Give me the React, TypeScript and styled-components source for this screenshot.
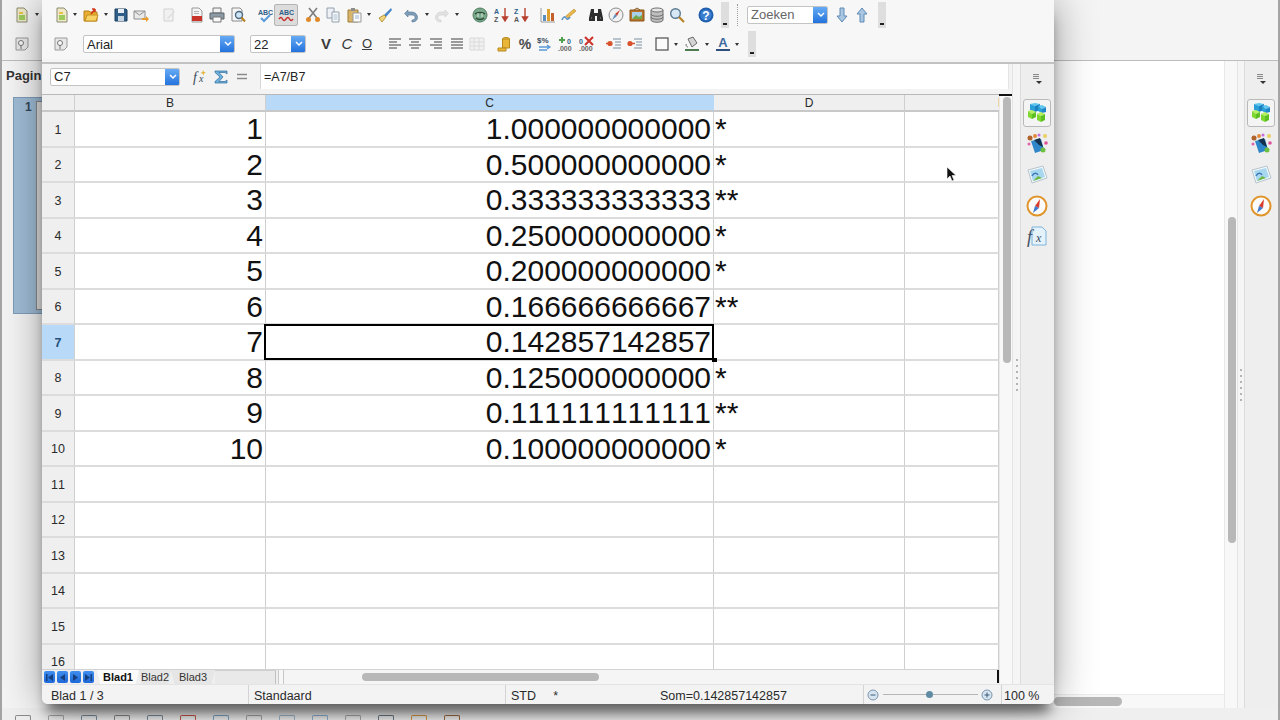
import React from "react";
import styled, { createGlobalStyle } from "styled-components";

const GlobalStyle = createGlobalStyle`
  html, body { margin: 0; padding: 0; width: 1280px; height: 720px; overflow: hidden; }
  body { font-family: "Liberation Sans", Arial, sans-serif; color: #1c1c1c; background: #f4f4f4; font-kerning: none; }
`;

const Desktop = styled.div`
  position: relative;
  width: 1280px;
  height: 720px;
  overflow: hidden;
  background: #f4f4f4;
`;

/* window at the back */
const BackWindow = styled.div`
  position: absolute;
  inset: 0;
  display: flex;
  flex-direction: column;
  border-left: 2px solid #a4a4a4;
  border-right: 2px solid #a4a4a4;
  background: #f4f4f4;
`;
const BackTop = styled.div`
  height: 61px;
  flex: none;
  box-sizing: border-box;
  border-bottom: 1px solid #bdbdbd;
  display: flex;
  flex-direction: column;
  padding-left: 3px;
`;
const BackToolRow = styled.div<{ $h: number }>`
  height: ${(p) => p.$h}px;
  display: flex;
  align-items: center;
  gap: 4px;
  padding-left: 9px;
`;
const BackBody = styled.div`
  flex: 1;
  display: flex;
  min-height: 0;
`;
const PagePanel = styled.div`
  width: 40px;
  flex: none;
  box-sizing: border-box;
  padding: 7px 0 0 4px;
`;
const PageTitle = styled.div`
  font-size: 13px;
  font-weight: 700;
  line-height: 15px;
  white-space: nowrap;
  color: #333;
`;
const PageThumb = styled.div`
  position: relative;
  margin: 14px 0 0 7px;
  width: 40px;
  height: 217px;
  box-sizing: border-box;
  border: 1px solid #7f9db9;
  background: #9fbcd6;
  font-size: 12px;
  font-weight: 700;
  color: #33465a;
  padding: 2px 0 0 11px;
  &::after {
    content: "";
    position: absolute;
    left: 22px;
    top: 3px;
    bottom: 3px;
    width: 16px;
    background: #e2e2e2;
    border: 1px solid #8b8b8b;
  }
`;
const BackCanvas = styled.div`
  flex: 1;
  display: flex;
  flex-direction: column;
`;
const BackSheet = styled.div`
  flex: 1;
  background: #fff;
`;
const BackHScroll = styled.div`
  height: 14px;
  flex: none;
  background: #f8f8f8;
  border-top: 1px solid #ececec;
  padding: 2px 0 0 1012px;
  box-sizing: border-box;
`;
const BackHThumb = styled.div`
  width: 68px;
  height: 9px;
  border-radius: 5px;
  background: #b7b7b7;
`;
const BackStrip = styled.div`
  height: 12px;
  flex: none;
  box-sizing: border-box;
  display: flex;
  align-items: flex-start;
  gap: 17px;
  padding: 7px 0 0 13px;
  overflow: hidden;
  background: #efefef;
`;
const StripChip = styled.span<{ $c: string }>`
  width: 14px;
  height: 6px;
  flex: none;
  border-radius: 2px 2px 0 0;
  border: 1px solid ${(p) => p.$c};
  border-bottom: none;
`;
const VScrollTrack = styled.div<{ $pad: number; $len: number }>`
  width: 13px;
  flex: none;
  box-sizing: border-box;
  background: #f8f8f8;
  border-left: 1px solid #e8e8e8;
  padding: ${(p) => p.$pad}px 0 0 3px;
  &::before {
    content: "";
    display: block;
    width: 8px;
    height: ${(p) => p.$len}px;
    border-radius: 4px;
    background: #b8b8b8;
  }
`;
const Gutter = styled.div<{ $pad: number; $w: number }>`
  width: ${(p) => p.$w}px;
  flex: none;
  box-sizing: border-box;
  background: #f5f5f5;
  border-left: 1px solid #e4e4e4;
  display: flex;
  flex-direction: column;
  align-items: center;
  gap: 4px;
  padding-top: ${(p) => p.$pad}px;
`;
const GutterDot = styled.span`
  width: 2px;
  height: 2px;
  background: #b4b4b4;
`;
const Deck = styled.div`
  width: 34px;
  flex: none;
  box-sizing: border-box;
  padding-right: 2px;
  background: #eeeeee;
  border-left: 1px solid #dcdcdc;
  display: flex;
  flex-direction: column;
  align-items: center;
`;
const DeckMenu = styled.div<{ $h: number; $pb: number }>`
  height: ${(p) => p.$h}px;
  display: flex;
  align-items: center;
  padding-bottom: ${(p) => p.$pb}px;
  box-sizing: border-box;
  flex: none;
`;
const DeckItem = styled.div<{ $active?: boolean }>`
  width: 28px;
  height: 28px;
  flex: none;
  margin-bottom: 3px;
  box-sizing: border-box;
  display: flex;
  align-items: center;
  justify-content: center;
  border-radius: 3px;
  border: 1px solid ${(p) => (p.$active ? "#b9b9b9" : "transparent")};
  background: ${(p) => (p.$active ? "#f4f4f4" : "transparent")};
`;

/* front window */
const FrontWindow = styled.div`
  position: absolute;
  left: 42px;
  top: 0;
  width: 1012px;
  height: 704px;
  display: flex;
  flex-direction: column;
  background: #f3f3f3;
  border-radius: 0 0 6px 6px;
  box-shadow: 0 0 42px rgba(0, 0, 0, 0.38), 0 13px 13px -5px rgba(0, 0, 0, 0.55);
  overflow: hidden;
`;
const Toolbars = styled.div`
  height: 64px;
  flex: none;
  box-sizing: border-box;
  border-bottom: 2px solid #c2c2c2;
  background: #f4f4f4;
`;
const ToolRow = styled.div<{ $pad: number; $h: number }>`
  height: ${(p) => p.$h}px;
  display: flex;
  align-items: center;
  padding-left: ${(p) => p.$pad}px;
  background: #f7f7f7;
`;
const Slot = styled.span<{ $gap?: number; $pressed?: boolean }>`
  width: 16px;
  height: 16px;
  flex: none;
  position: relative;
  margin-left: ${(p) => p.$gap ?? 0}px;
  display: flex;
  align-items: center;
  justify-content: center;
  &::before {
    content: "";
    display: ${(p) => (p.$pressed ? "block" : "none")};
    position: absolute;
    inset: -3px -4px;
    background: #dcdcdc;
    border: 1px solid #b4b4b4;
    border-radius: 2px;
  }
  & > svg { position: relative; }
`;
const Drop = styled.span<{ $gap?: number }>`
  width: 6px;
  flex: none;
  margin-left: ${(p) => p.$gap ?? 0}px;
  display: flex;
  justify-content: center;
  &::before {
    content: "";
    border-left: 2.5px solid transparent;
    border-right: 2.5px solid transparent;
    border-top: 3px solid #333;
  }
`;
const Grip = styled.span<{ $gap?: number }>`
  width: 8px;
  height: 26px;
  flex: none;
  margin-left: ${(p) => p.$gap ?? 0}px;
  background: #dedede;
  display: flex;
  align-items: flex-end;
  justify-content: center;
  padding-bottom: 3px;
  box-sizing: border-box;
  &::before {
    content: "";
    width: 4px;
    height: 2px;
    background: #222;
  }
`;
const DottedSep = styled.span<{ $gap?: number }>`
  width: 0;
  height: 22px;
  flex: none;
  margin-left: ${(p) => p.$gap ?? 0}px;
  border-left: 1px dotted #9f9f9f;
`;
const Combo = styled.div<{ $gap?: number; $w: number; $grey?: boolean }>`
  width: ${(p) => p.$w}px;
  height: 18px;
  flex: none;
  margin-left: ${(p) => p.$gap ?? 0}px;
  box-sizing: border-box;
  display: flex;
  align-items: center;
  background: #fff;
  border: 1px solid #c4c4c4;
  border-radius: 2px;
  font-size: 13px;
  color: ${(p) => (p.$grey ? "#666" : "#222")};
  overflow: hidden;
`;
const ComboText = styled.span`
  flex: 1;
  padding-left: 3px;
  white-space: nowrap;
`;
const ComboButton = styled.span`
  width: 15px;
  align-self: stretch;
  flex: none;
  margin: -1px -1px -1px 0;
  display: flex;
  align-items: center;
  justify-content: center;
  border-radius: 0 2px 2px 0;
  background: linear-gradient(#6aaef5, #1f6fdc);
`;
const FontStyleButton = styled.span<{ $gap: number; $kind: "bold" | "italic" | "under" }>`
  width: 16px;
  flex: none;
  margin-left: ${(p) => p.$gap}px;
  text-align: center;
  font-size: ${(p) => (p.$kind === "under" ? 13 : 15)}px;
  line-height: 16px;
  color: #3a3a3a;
  font-weight: ${(p) => (p.$kind === "bold" ? 700 : 400)};
  font-style: ${(p) => (p.$kind === "italic" ? "italic" : "normal")};
  text-decoration: ${(p) => (p.$kind === "under" ? "underline" : "none")};
`;

const WorkArea = styled.div`
  flex: 1;
  min-height: 0;
  display: flex;
`;
const WorkColumn = styled.div`
  width: 970px;
  flex: none;
  display: flex;
  flex-direction: column;
`;
const FormulaBar = styled.div`
  height: 30px;
  flex: none;
  box-sizing: border-box;
  display: flex;
  align-items: center;
  padding: 0 0 5px 8px;
  background: #f3f3f3;
`;
const FormulaInput = styled.div`
  margin-left: 10px;
  width: 749px;
  height: 25px;
  flex: none;
  box-sizing: border-box;
  background: #fff;
  border-left: 1px solid #d8d8d8;
  border-right: 1px solid #e4e4e4;
  font-size: 12.5px;
  line-height: 27px;
  padding-left: 3px;
  color: #222;
`;

const Main = styled.div`
  flex: 1;
  min-height: 0;
  display: flex;
  position: relative;
`;
const CornerMark = styled.span`
  position: absolute;
  left: 957px;
  top: 0;
  width: 13px;
  height: 2px;
  background: #111;
`;
const SheetColumn = styled.div`
  width: 957px;
  flex: none;
  display: flex;
  flex-direction: column;
  position: relative;
`;
const SheetGrid = styled.div`
  flex: 1;
  min-height: 0;
  overflow: hidden;
  display: grid;
  grid-template-columns: 33px 191px 448px 191px 94px;
  grid-template-rows: 17px;
  grid-auto-rows: 35.5px;
  background: #fff;
  border-top: 1px solid #b8b8b8;
`;
const ColHead = styled.div<{ $on?: boolean }>`
  display: flex;
  align-items: center;
  justify-content: center;
  font-size: 12px;
  color: #2a2a2a;
  padding-bottom: 0;
  background: ${(p) => (p.$on ? "#b9d9f8" : "#efefef")};
  border-right: 1px solid ${(p) => (p.$on ? "#b9d9f8" : "#cfcfcf")};
  border-bottom: 2px solid #c8c8c8;
  box-sizing: border-box;
`;
const ClippedHead = styled(ColHead)`
  justify-content: flex-end;
  border-right: none;
  overflow: hidden;
  & > span { margin-right: -7px; color: #222; }
`;
const RowHead = styled.div<{ $on?: boolean }>`
  display: flex;
  align-items: center;
  justify-content: center;
  font-size: 12.5px;
  box-sizing: border-box;
  padding-top: 2px;
  font-weight: ${(p) => (p.$on ? 700 : 400)};
  color: ${(p) => (p.$on ? "#24507c" : "#2a2a2a")};
  background: ${(p) => (p.$on ? "#b9d9f8" : "#efefef")};
  border-right: 1px solid #cfcfcf;
  border-bottom: 2px solid #dcdcdc;
`;
const Cell = styled.div<{ $left?: boolean; $selected?: boolean }>`
  position: relative;
  box-sizing: border-box;
  font-size: 30px;
  line-height: 34px;
  color: #111;
  white-space: nowrap;
  text-align: ${(p) => (p.$left ? "left" : "right")};
  padding-right: 2px;
  padding-left: ${(p) => (p.$left ? 1 : 0)}px;
  border-right: 1px solid #cfcfcf;
  border-bottom: 2px solid #dcdcdc;
  &::after {
    content: "";
    display: ${(p) => (p.$selected ? "block" : "none")};
    position: absolute;
    inset: -1px -1px -1px -2px;
    border: 2px solid #000;
  }
`;
const FillHandle = styled.span`
  position: absolute;
  right: -4px;
  bottom: -3px;
  width: 5px;
  height: 4px;
  background: #000;
  z-index: 1;
`;
const EdgeBar = styled.span`
  position: absolute;
  left: 955px;
  bottom: 1px;
  width: 2px;
  height: 13px;
  background: #111;
`;
const TabBar = styled.div`
  height: 14px;
  flex: none;
  display: flex;
  align-items: center;
  background: #efefef;
  border-top: 1px solid #d2d2d2;
  padding-left: 2px;
`;
const TabNav = styled.span`
  width: 11px;
  height: 12px;
  flex: none;
  margin-right: 2px;
  border-radius: 2px;
  background: linear-gradient(#3f8eee, #1d68d8);
  display: flex;
  align-items: center;
  justify-content: center;
`;
const Tab = styled.span<{ $on?: boolean; $w: number }>`
  width: ${(p) => p.$w}px;
  flex: none;
  font-size: 11px;
  line-height: 14px;
  text-align: center;
  font-weight: ${(p) => (p.$on ? 700 : 400)};
  margin-left: ${(p) => (p.$on ? 1 : 0)}px;
  color: ${(p) => (p.$on ? "#111" : "#333")};
  background: ${(p) => (p.$on ? "#fbfbfb" : "#e6e6e6")};
  clip-path: polygon(0 0, 100% 0, 92% 100%, 8% 100%);
`;
const TabRest = styled.span`
  width: 61px;
  height: 14px;
  flex: none;
  box-sizing: border-box;
  border-top: 1px solid #cfcfcf;
  border-right: 1px solid #c0c0c0;
  background: #e9e9e9;
`;
const TabHandle = styled.span`
  width: 4px;
  height: 14px;
  flex: none;
  margin-left: 2px;
  background: #f7f7f7;
  border-left: 1px solid #c8c8c8;
  border-right: 1px solid #c8c8c8;
`;
const HScrollTrack = styled.div`
  flex: 1;
  height: 14px;
  padding: 3px 0 0 78px;
  box-sizing: border-box;
  background: #f5f5f5;
`;
const HScrollThumb = styled.div`
  width: 237px;
  height: 8px;
  border-radius: 4px;
  background: #b8b8b8;
`;
const StatusBar = styled.div`
  height: 20px;
  flex: none;
  display: flex;
  align-items: center;
  background: #f3f3f3;
  border-top: 1px solid #e4e4e4;
  box-sizing: border-box;
  font-size: 12.5px;
  color: #2a2a2a;
`;
const StatusCell = styled.div<{ $w: number; $pad: number; $line?: boolean }>`
  width: ${(p) => p.$w}px;
  height: 100%;
  flex: none;
  box-sizing: border-box;
  padding-left: ${(p) => p.$pad}px;
  line-height: 22px;
  white-space: nowrap;
  border-left: ${(p) => (p.$line ? "1px solid #d4d4d4" : "none")};
`;
const ZoomCell = styled(StatusCell)`
  display: flex;
  align-items: center;
`;
const SliderLine = styled.div`
  width: 95px;
  height: 1px;
  margin: 0 3px 0 4px;
  background: #b5b5b5;
  position: relative;
  &::after {
    content: "";
    position: absolute;
    left: 43px;
    top: -3px;
    width: 7px;
    height: 7px;
    border-radius: 50%;
    background: #5f8ca3;
  }
`;
const Pointer = styled.svg`
  position: absolute;
  left: 946px;
  top: 167px;
`;

type SvgProps = { children: React.ReactNode; size?: number };
const Ico = ({ children, size = 16 }: SvgProps) => (
  <svg width={size} height={size} viewBox="0 0 16 16" fill="none">
    {children}
  </svg>
);

const icons: Record<string, React.ReactNode> = {
  newDoc: <Ico><path d="M3 1h7l3 3v11H3z" fill="#efe9c8" stroke="#8a8a70" /><path d="M5 8h6v5H5z" fill="#9ccb5c" /><path d="M5 5h4v2H5z" fill="#e6c24a" /></Ico>,
  open: <Ico><path d="M1 4h5l1 1h7v9H1z" fill="#e8b032" stroke="#b87f18" /><path d="M2 14l2-6h11l-2 6z" fill="#f7d264" stroke="#c48f22" /><path d="M8 7l4-5M12 2v3M12 2H9" stroke="#d03a20" strokeWidth="1.6" /></Ico>,
  save: <Ico><path d="M2 2h11l1 1v11H2z" fill="#2f5f88" stroke="#1d3f60" /><path d="M5 2h6v4H5z" fill="#e8eef4" /><path d="M5 9h6v5H5z" fill="#c8d6e2" /></Ico>,
  mail: <Ico><path d="M1 4h11v8H1z" fill="#e9e9e9" stroke="#8e8e8e" /><path d="M1 4l5.500 4L12 4" stroke="#8e8e8e" /><path d="M9 11h4V9l3 3-3 3v-2H9z" fill="#e49a2c" /></Ico>,
  edit: <Ico><path d="M3 2h9v12H3z" fill="#f1f1f1" stroke="#d2d2d2" /><path d="M6 11l7-7 1 1-7 7z" fill="#dedede" /></Ico>,
  pdf: <Ico><path d="M3 1h7l3 3v11H3z" fill="#f4f4f4" stroke="#999" /><rect x="3" y="9" width="10" height="5" fill="#c8332a" /><path d="M5 4h5v1H5zM5 6h5v1H5z" fill="#b5b5b5" /></Ico>,
  print: <Ico><path d="M4 1h8v5H4z" fill="#f2f2f2" stroke="#777" /><path d="M1 6h14v6H1z" fill="#8d99a3" stroke="#5a646c" /><path d="M4 10h8v5H4z" fill="#fafafa" stroke="#777" /></Ico>,
  preview: <Ico><path d="M2 1h8l2 2v11H2z" fill="#f6f6f6" stroke="#8b8b8b" /><circle cx="9" cy="8" r="3.500" fill="#cfe4f4" stroke="#4d6a82" strokeWidth="1.400" /><path d="M11.500 10.500L15 14.500" stroke="#b88226" strokeWidth="2" /></Ico>,
  spell: <Ico><text x="1" y="8" fontSize="7" fontWeight="700" fontFamily="Liberation Sans" fill="#2f5f88">ABC</text><path d="M4 11l3 3 6-6" stroke="#5b9bd8" strokeWidth="2" /></Ico>,
  autospell: <Ico><text x="1" y="8" fontSize="7" fontWeight="700" fontFamily="Liberation Sans" fill="#2f5f88">ABC</text><path d="M1 12q2-3 3.500 0t3.500 0 3.500 0 3.500 0" stroke="#c8302a" strokeWidth="1.400" /></Ico>,
  cut: <Ico><path d="M4 1l8 10M12 1L4 11" stroke="#7d7d7d" strokeWidth="1.600" /><circle cx="3.500" cy="12.500" r="2.500" fill="#e08a2c" /><circle cx="12.500" cy="12.500" r="2.500" fill="#e08a2c" /></Ico>,
  copy: <Ico><path d="M2 1h7v10H2z" fill="#eef1f5" stroke="#93a0ad" /><path d="M7 5h7v10H7z" fill="#f8f8f8" stroke="#93a0ad" /><path d="M8.500 8h4M8.500 10h4M8.500 12h4" stroke="#a9c0d8" /></Ico>,
  paste: <Ico><path d="M2 3h10v12H2z" fill="#d9b56c" stroke="#9f7d36" /><path d="M5 1h4v3H5z" fill="#8c8c8c" /><path d="M7 6h8v9H7z" fill="#fafafa" stroke="#999" /><path d="M9 9h4M9 11h4" stroke="#9bb7d2" /></Ico>,
  brush: <Ico><path d="M14 1L7 8l2 2 6-7z" fill="#4a86c8" /><path d="M7 8l-5 3 3 4 4-5z" fill="#f2d37e" stroke="#b8973e" /></Ico>,
  undo: <Ico><path d="M5 3L1.500 6.500 5 10V8h4c2 0 3 1 3 2.500S11 13 9 13v2c3.500 0 5.500-2 5.500-4.500S12.500 5 9 5H5z" fill="#7d9db8" stroke="#587690" strokeWidth=".6" /></Ico>,
  redo: <Ico><path d="M11 3l3.500 3.500L11 10V8H7c-2 0-3 1-3 2.500S5 13 7 13v2c-3.500 0-5.500-2-5.500-4.500S3.500 5 7 5h4z" fill="#e2e2e2" stroke="#cdcdcd" strokeWidth=".6" /></Ico>,
  nav: <Ico><circle cx="8" cy="8" r="7" fill="#7aa88a" stroke="#4f7d60" /><path d="M3 7c2-2 8-2 10 0M4 11c2 2 6 2 8 0" stroke="#2c4a3a" strokeWidth="1.400" /><path d="M6 6v4M10 6v4" stroke="#d8e8dc" /></Ico>,
  sortUp: <Ico><text x="0" y="7" fontSize="7" fontWeight="700" fontFamily="Liberation Sans" fill="#2f5f88">A</text><text x="0" y="15" fontSize="7" fontWeight="700" fontFamily="Liberation Sans" fill="#555">Z</text><path d="M11 1v10M8.500 10l2.500 4 2.500-4z" stroke="#b8402e" strokeWidth="1.400" fill="#b8402e" /></Ico>,
  sortDown: <Ico><text x="0" y="7" fontSize="7" fontWeight="700" fontFamily="Liberation Sans" fill="#2f5f88">Z</text><text x="0" y="15" fontSize="7" fontWeight="700" fontFamily="Liberation Sans" fill="#555">A</text><path d="M11 1v10M8.500 10l2.500 4 2.500-4z" stroke="#b8402e" strokeWidth="1.400" fill="#b8402e" /></Ico>,
  chart: <Ico><path d="M1 1v14h14" stroke="#9a9a9a" /><path d="M3 8h3v6H3z" fill="#5b8fc0" /><path d="M7 2h3v12H7z" fill="#e0a030" /><path d="M11 6h3v8h-3z" fill="#c4602c" /></Ico>,
  draw: <Ico><path d="M5 9l8-7 2 2-8 7z" fill="#e8b94a" stroke="#b8872a" strokeWidth=".6" /><path d="M1 13c1-3 3-4 4-2s3 1 4-1" stroke="#5b8fc0" strokeWidth="1.600" /></Ico>,
  find: <Ico><path d="M3 2h3v4h4V2h3l2 9v3H9V9H7v5H1v-3z" fill="#2d2d2d" /><path d="M3 11h1M12 11h1" stroke="#999" /></Ico>,
  compass: <Ico><circle cx="8" cy="8" r="7" fill="#f1f1f1" stroke="#8a8a8a" /><path d="M12 3L7 7l2 2z" fill="#c8402e" /><path d="M4 13l3-6 2 2z" fill="#5b8fc0" /></Ico>,
  gallery: <Ico><path d="M1 3h14v11H1z" fill="#b8742c" stroke="#8a5418" /><path d="M3 5h10v7H3z" fill="#a8d0ea" /><path d="M3 12l4-4 3 2 3-2v4z" fill="#6fa84a" /><path d="M5 3l3-2 3 2" stroke="#8a5418" /></Ico>,
  db: <Ico><path d="M2 3v10c0 3 12 3 12 0V3z" fill="#bfbfbf" stroke="#6f6f6f" /><ellipse cx="8" cy="3" rx="6" ry="2" fill="#e6e6e6" stroke="#6f6f6f" /><path d="M2 7c0 3 12 3 12 0M2 10c0 3 12 3 12 0" stroke="#6f6f6f" /></Ico>,
  zoom: <Ico><circle cx="6.500" cy="6.500" r="4.800" fill="#d6e8f5" stroke="#5b7a92" strokeWidth="1.400" /><path d="M10 10l5 5" stroke="#b88226" strokeWidth="2.200" /></Ico>,
  help: <Ico><circle cx="8" cy="8" r="7.500" fill="#1f5fae" /><circle cx="8" cy="8" r="5.600" fill="#3a7fd0" /><text x="8" y="12.500" textAnchor="middle" fontSize="12" fontWeight="700" fontFamily="Liberation Sans" fill="#fff">?</text></Ico>,
  down: <Ico><path d="M6 1h4v8h3l-5 6-5-6h3z" fill="#a9c6e2" stroke="#5f8ab4" /></Ico>,
  up: <Ico><path d="M6 15h4V7h3L8 1 3 7h3z" fill="#a9c6e2" stroke="#5f8ab4" /></Ico>,
  frame: <Ico><path d="M2 2h12v9l-3 3H2z" fill="#e8e8e8" stroke="#9a9a9a" /><circle cx="7" cy="7" r="2.500" fill="#f8f8f8" stroke="#777" /><path d="M7 9v4" stroke="#777" /></Ico>,
  left: <Ico><path d="M2 3h12M2 6h8M2 9h12M2 12h8" stroke="#7e7e7e" strokeWidth="1.300" /></Ico>,
  center: <Ico><path d="M2 3h12M4 6h8M2 9h12M4 12h8" stroke="#7e7e7e" strokeWidth="1.300" /></Ico>,
  right: <Ico><path d="M2 3h12M6 6h8M2 9h12M6 12h8" stroke="#7e7e7e" strokeWidth="1.300" /></Ico>,
  just: <Ico><path d="M2 3h12M2 6h12M2 9h12M2 12h12" stroke="#7e7e7e" strokeWidth="1.300" /></Ico>,
  merge: <Ico><path d="M1 2h14v12H1zM1 6h14M1 10h14M5 2v12M10 2v12" stroke="#dadada" fill="#f1f1f1" /></Ico>,
  currency: <Ico><ellipse cx="9" cy="3" rx="3.500" ry="1.500" fill="#f2c94c" stroke="#b88a1e" /><path d="M5.500 3v9h7V3z" fill="#e9b63a" stroke="#b88a1e" /><path d="M1 12h8v3H1z" fill="#e9b63a" stroke="#b88a1e" /></Ico>,
  pct: <Ico><text x="8" y="13" textAnchor="middle" fontSize="14" fontWeight="700" fontFamily="Liberation Sans" fill="#4a4a4a">%</text></Ico>,
  fmt: <Ico><text x="0" y="7" fontSize="8" fontWeight="700" fontFamily="Liberation Sans" fill="#3a4a58">$%</text><path d="M2 11h10M10 9l3 2-3 2M2 14h8" stroke="#5b9bd8" strokeWidth="1.300" /></Ico>,
  addDec: <Ico><path d="M4 1v6M1 4h6" stroke="#4fa04a" strokeWidth="2" /><text x="9" y="8" fontSize="7" fontWeight="700" fontFamily="Liberation Sans" fill="#2f5f88">0</text><text x="0" y="15" fontSize="7" fontWeight="700" fontFamily="Liberation Sans" fill="#666">.000</text></Ico>,
  delDec: <Ico><text x="0" y="8" fontSize="7" fontWeight="700" fontFamily="Liberation Sans" fill="#2f5f88">0</text><path d="M6 1l8 8M14 1L6 9" stroke="#cc3228" strokeWidth="2" /><text x="0" y="15" fontSize="7" fontWeight="700" fontFamily="Liberation Sans" fill="#666">.000</text></Ico>,
  indentL: <Ico><path d="M7 3h8M9 6h6M9 9h6M7 12h8" stroke="#7b8e9e" /><circle cx="4" cy="7.500" r="2.600" fill="#d8532c" /><path d="M0 7.500h4" stroke="#d8532c" strokeWidth="1.500" /></Ico>,
  indentR: <Ico><path d="M7 3h8M9 6h6M9 9h6M7 12h8" stroke="#7b8e9e" /><circle cx="3" cy="7.500" r="2.600" fill="#d8532c" /><path d="M3 7.500h5" stroke="#d8532c" strokeWidth="1.500" /></Ico>,
  border: <Ico><rect x="2" y="2" width="12" height="12" fill="#fafafa" stroke="#4e4e4e" strokeWidth="1.200" /></Ico>,
  bg: <Ico><path d="M4 3l5-2 4 6-5 4z" fill="#d4d4d4" stroke="#6a6a6a" /><path d="M1 13h14v2H1z" fill="#4d7a50" /><path d="M2 8c0 2 1 3 2 3" stroke="#6a6a6a" /></Ico>,
  color: <Ico><text x="8" y="11" textAnchor="middle" fontSize="13" fontWeight="700" fontFamily="Liberation Sans" fill="#3d6aa0">A</text><path d="M1 13h14v2H1z" fill="#2c4f7c" /></Ico>,
  fx: <Ico><text x="1" y="13" fontSize="14" fontStyle="italic" fontFamily="Liberation Serif" fill="#3a4a58">f</text><text x="7" y="13" fontSize="10" fontStyle="italic" fontFamily="Liberation Serif" fill="#3a4a58">x</text><path d="M11 1l1 2 2 .5-2 1-.5 2-1-2-2-.5 2-1z" fill="#e2b43a" /></Ico>,
  sigma: <Ico><path d="M2 2h12v3l-2-1.500H6l4 4.500-4 4.500h6l2-1.500v3H2v-1.500L7 8 2 3.500z" fill="#6fb0dc" stroke="#2f6f9f" strokeWidth=".7" /></Ico>,
  equals: <Ico><path d="M3 5.500h10M3 9.500h10" stroke="#8a8a8a" strokeWidth="1.600" /></Ico>,
};

const DeckCubes = () => (
  <svg width="22" height="22" viewBox="1 0 22 22">
    <path d="M5 2l5-1 5 1-5 2z" fill="#58c8f0" /><path d="M5 2v6l5 2V4z" fill="#2a9fd8" /><path d="M15 2v6l-5 2V4z" fill="#1b7fc0" />
    <path d="M13 4l4-1 4 2-4 2z" fill="#60c8f0" /><path d="M13 4v5l4 2V7z" fill="#2a9fd8" /><path d="M21 5v5l-4 1V7z" fill="#1f86c8" />
    <path d="M3 9l4-1 4 2-4 2z" fill="#b4f060" /><path d="M3 9v6l4 2v-5z" fill="#7fd832" /><path d="M11 10v5l-4 2v-5z" fill="#5cc020" />
    <path d="M12 12l4-2 4 2-4 2z" fill="#b4f060" /><path d="M12 12v6l4 2v-6z" fill="#7fd832" /><path d="M20 12v6l-4 2v-6z" fill="#5cc020" />
  </svg>
);
const DeckStyles = () => (
  <svg width="22" height="22" viewBox="0 0 22 22">
    <path d="M5 8l10-2 3 11-9 3z" fill="#2f86c8" /><path d="M8 7l6-2 3 9-4-2z" fill="#14304c" />
    <circle cx="4" cy="5" r="2.500" fill="#b0632c" /><circle cx="9" cy="3" r="2" fill="#e08a3c" /><circle cx="13" cy="2" r="1.500" fill="#c86ae0" />
    <circle cx="19" cy="3" r="2" fill="#e8d060" /><circle cx="3" cy="11" r="1.500" fill="#e060b0" /><circle cx="20" cy="10" r="1.800" fill="#e0509a" /><circle cx="17" cy="17" r="2.500" fill="#6cc040" />
  </svg>
);
const DeckGallery = () => (
  <svg width="22" height="22" viewBox="0 0 22 22">
    <path d="M2 6l15-4 4 12-15 5z" fill="#f4f8fa" stroke="#b4c4cc" />
    <path d="M4 7l12-3 3 9-12 4z" fill="#a8d8f0" /><path d="M7 17l5-5 4 2 3-1z" fill="#6cb840" /><path d="M6 12c2-4 5-3 6-1" stroke="#3f78b8" strokeWidth="1.500" fill="none" />
  </svg>
);
const DeckCompass = () => (
  <svg width="22" height="22" viewBox="0 0 22 22">
    <circle cx="11" cy="11" r="9.500" fill="#fbfbfb" stroke="#e0952c" strokeWidth="2" />
    <path d="M14 4l-5 7 4 2z" fill="#d83c2c" /><path d="M7 18l2-7 4 2z" fill="#3f78d0" />
  </svg>
);
const DeckFx = () => (
  <svg width="22" height="22" viewBox="0 0 22 22">
    <path d="M6 1h10l4 4v14H6z" fill="#e4f2fb" stroke="#7fb4da" />
    <text x="1" y="17" fontSize="18" fontStyle="italic" fontFamily="Liberation Serif" fill="#3d4d60">f</text>
    <text x="10" y="16" fontSize="12" fontStyle="italic" fontFamily="Liberation Serif" fill="#3d4d60">x</text>
  </svg>
);
const DeckMenuIcon = () => (
  <svg width="10" height="11" viewBox="0 0 10 11">
    <path d="M1 1h6v5H1z" fill="#8a8a8a" /><path d="M1 2.500h6M1 4.500h6" stroke="#e8e8e8" /><path d="M4 8h6l-3 3z" fill="#333" />
  </svg>
);
const Chevron = () => (
  <svg width="8" height="6" viewBox="0 0 8 6" fill="none"><path d="M1 1l3 3 3-3" stroke="#fff" strokeWidth="1.500" /></svg>
);
const NavArrow = ({ d }: { d: string }) => (
  <svg width="7" height="7" viewBox="0 0 7 7"><path d={d} fill="#16407e" /></svg>
);

type Item =
  | { t: "i"; n: string; g?: number; pressed?: boolean }
  | { t: "d"; g: number }
  | { t: "g"; g: number }
  | { t: "s"; g: number };

const i = (n: string, g: number, pressed?: boolean): Item => ({ t: "i", n, g, pressed });
const d = (g: number): Item => ({ t: "d", g });

const renderItems = (items: Item[]) =>
  items.map((it, k) => {
    if (it.t === "i") return <Slot key={k} $gap={it.g} $pressed={it.pressed}>{icons[it.n]}</Slot>;
    if (it.t === "d") return <Drop key={k} $gap={it.g} />;
    if (it.t === "g") return <Grip key={k} $gap={it.g} />;
    return <DottedSep key={k} $gap={it.g} />;
  });

const row1a: Item[] = [
  i("newDoc", 0), d(2), i("open", 5), d(4), i("save", 4), i("mail", 4), i("edit", 12), i("pdf", 12), i("print", 4), i("preview", 5),
  i("spell", 11), i("autospell", 5, true), i("cut", 11), i("copy", 4), i("paste", 5), d(4), i("brush", 5), i("undo", 10), d(5), i("redo", 4), d(4),
  i("nav", 12), i("sortUp", 6), i("sortDown", 4), i("chart", 10), i("draw", 5), i("find", 11), i("compass", 4), i("gallery", 5), i("db", 4), i("zoom", 4), i("help", 13),
  { t: "g", g: 7 }, { t: "s", g: 8 },
];
const row1b: Item[] = [i("down", 6), i("up", 4), { t: "g", g: 8 }];
const row2a: Item[] = [i("frame", 0)];
const row2b: Item[] = [
  i("left", 12), i("center", 4), i("right", 5), i("just", 5), i("merge", 4), i("currency", 12), i("pct", 4), i("fmt", 4), i("addDec", 5), i("delDec", 5),
  i("indentL", 11), i("indentR", 5), i("border", 11), d(3), i("bg", 5), d(4), i("color", 5), d(3), { t: "g", g: 8 },
];

const colB = ["1", "2", "3", "4", "5", "6", "7", "8", "9", "10"];
const colC = [
  "1.000000000000", "0.500000000000", "0.333333333333", "0.250000000000", "0.200000000000",
  "0.166666666667", "0.142857142857", "0.125000000000", "0.111111111111", "0.100000000000",
];
const colD = ["*", "*", "**", "*", "*", "**", "", "*", "**", "*"];
const rowNumbers = Array.from({ length: 16 }, (_, n) => n + 1);
const stripColors = ["#8c8c8c", "#a8a8a8", "#7b8e9e", "#8a8a8a", "#7b8e9e", "#c8564a", "#7ba4c8", "#a5a5a5", "#9fb9d0", "#8fb2d6", "#a8a8a8", "#6a7a88", "#d89a40", "#a06a3c"];

function DeckIcons({ withFx, menuH, menuPb }: { withFx?: boolean; menuH: number; menuPb: number }) {
  return (
    <Deck>
      <DeckMenu $h={menuH} $pb={menuPb}><DeckMenuIcon /></DeckMenu>
      <DeckItem $active><DeckCubes /></DeckItem>
      <DeckItem><DeckStyles /></DeckItem>
      <DeckItem><DeckGallery /></DeckItem>
      <DeckItem><DeckCompass /></DeckItem>
      {withFx && <DeckItem><DeckFx /></DeckItem>}
    </Deck>
  );
}

function Dots() {
  return (
    <>
      {[0, 1, 2, 3, 4, 5].map((n) => <GutterDot key={n} />)}
    </>
  );
}

export default function App() {
  return (
    <Desktop>
      <GlobalStyle />
      <BackWindow>
        <BackTop>
          <BackToolRow $h={29}>{icons.newDoc}<Drop /></BackToolRow>
          <BackToolRow $h={30}>{icons.frame}</BackToolRow>
        </BackTop>
        <BackBody>
          <PagePanel>
            <PageTitle>Pagin</PageTitle>
            <PageThumb>1</PageThumb>
          </PagePanel>
          <BackCanvas>
            <BackSheet />
            <BackHScroll><BackHThumb /></BackHScroll>
          </BackCanvas>
          <VScrollTrack $pad={156} $len={326} />
          <Gutter $w={7} $pad={308}><Dots /></Gutter>
          <DeckIcons menuH={38} menuPb={4} />
        </BackBody>
        <BackStrip>
          {stripColors.map((c, n) => <StripChip key={n} $c={c} />)}
        </BackStrip>
      </BackWindow>

      <FrontWindow>
        <Toolbars>
          <ToolRow $pad={12} $h={29}>
            {renderItems(row1a)}
            <Combo $gap={9} $w={81} $grey>
              <ComboText>Zoeken</ComboText>
              <ComboButton><Chevron /></ComboButton>
            </Combo>
            {renderItems(row1b)}
          </ToolRow>
          <ToolRow $pad={11} $h={30}>
            {renderItems(row2a)}
            <Combo $gap={14} $w={152}>
              <ComboText>Arial</ComboText>
              <ComboButton><Chevron /></ComboButton>
            </Combo>
            <Combo $gap={15} $w={56}>
              <ComboText>22</ComboText>
              <ComboButton><Chevron /></ComboButton>
            </Combo>
            <FontStyleButton $gap={12} $kind="bold">V</FontStyleButton>
            <FontStyleButton $gap={5} $kind="italic">C</FontStyleButton>
            <FontStyleButton $gap={4} $kind="under">O</FontStyleButton>
            {renderItems(row2b)}
          </ToolRow>
        </Toolbars>
        <WorkArea>
          <WorkColumn>
            <FormulaBar>
              <Combo $w={130}>
                <ComboText>C7</ComboText>
                <ComboButton><Chevron /></ComboButton>
              </Combo>
              <Slot $gap={12}>{icons.fx}</Slot>
              <Slot $gap={5}>{icons.sigma}</Slot>
              <Slot $gap={5}>{icons.equals}</Slot>
              <FormulaInput>=A7/B7</FormulaInput>
            </FormulaBar>
            <Main>
              <SheetColumn>
                <SheetGrid>
                  <ColHead />
                  <ColHead>B</ColHead>
                  <ColHead $on>C</ColHead>
                  <ColHead>D</ColHead>
                  <ClippedHead><span>E</span></ClippedHead>
                  {rowNumbers.map((n) => (
                    <React.Fragment key={n}>
                      <RowHead $on={n === 7}>{n}</RowHead>
                      <Cell>{colB[n - 1]}</Cell>
                      <Cell $selected={n === 7}>
                        {colC[n - 1]}
                        {n === 7 && <FillHandle />}
                      </Cell>
                      <Cell $left>{colD[n - 1]}</Cell>
                      <Cell />
                    </React.Fragment>
                  ))}
                </SheetGrid>
                <TabBar>
                  <TabNav><NavArrow d="M0 0h1.500v7H0zM7 0v7L2 3.500z" /></TabNav>
                  <TabNav><NavArrow d="M6 0v7L1 3.500z" /></TabNav>
                  <TabNav><NavArrow d="M1 0v7l5-3.500z" /></TabNav>
                  <TabNav><NavArrow d="M7 0H5.500v7H7zM0 0v7l5-3.500z" /></TabNav>
                  <Tab $on $w={42}>Blad1</Tab>
                  <Tab $w={32}>Blad2</Tab>
                  <Tab $w={44}>Blad3</Tab>
                  <TabRest />
                  <TabHandle />
                  <HScrollTrack><HScrollThumb /></HScrollTrack>
                </TabBar>
                <EdgeBar />
              </SheetColumn>
              <VScrollTrack $pad={3} $len={266} />
              <CornerMark />
            </Main>
          </WorkColumn>
          <Gutter $w={8} $pad={295}><Dots /></Gutter>
          <DeckIcons withFx menuH={35} menuPb={7} />
        </WorkArea>
        <StatusBar>
          <StatusCell $w={206} $pad={9}>Blad 1 / 3</StatusCell>
          <StatusCell $w={257} $pad={5} $line>Standaard</StatusCell>
          <StatusCell $w={151} $pad={5} $line>STD&nbsp;&nbsp;&nbsp;&nbsp;&nbsp;*</StatusCell>
          <StatusCell $w={207} $pad={4}>Som=0.142857142857</StatusCell>
          <ZoomCell $w={138} $pad={3} $line>
            <svg width="12" height="12" viewBox="0 0 12 12"><circle cx="6" cy="6" r="5" fill="#d6e4f0" stroke="#7b95ad" /><path d="M3.500 6h5" stroke="#3a5a78" /></svg>
            <SliderLine />
            <svg width="12" height="12" viewBox="0 0 12 12"><circle cx="6" cy="6" r="5" fill="#d6e4f0" stroke="#7b95ad" /><path d="M3.500 6h5M6 3.500v5" stroke="#3a5a78" /></svg>
          </ZoomCell>
          <StatusCell $w={53} $pad={2} $line>100 %</StatusCell>
        </StatusBar>
      </FrontWindow>

      <Pointer width="11" height="15" viewBox="0 0 11 15">
        <path d="M1 0v12l3-3 2 5 2-1-2-4.500h4z" fill="#111" stroke="#fff" strokeWidth=".6" />
      </Pointer>
    </Desktop>
  );
}
